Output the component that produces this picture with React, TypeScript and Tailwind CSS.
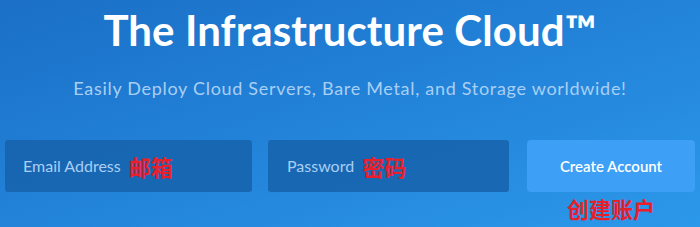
const cjk = { fontFamily: "'Noto Sans CJK SC', sans-serif" };

export default function App() {
  return (
    <div
      className="relative h-[227px] w-[700px] overflow-hidden bg-gradient-to-br from-[#1b6fc6] via-[#2283d9] to-[#2c98ea] text-white"
      style={{ fontFamily: "Lato, 'Open Sans', sans-serif" }}
    >
      <h1 className="pt-[6px] text-center text-[42px] font-bold leading-[48px] tracking-[0.1px]">
        The Infrastructure Cloud™
      </h1>
      <p className="mt-[23px] text-center text-[18px] leading-[22px] tracking-[0.7px] text-[#a9cff4]">
        Easily Deploy Cloud Servers, Bare Metal, and Storage worldwide!
      </p>

      <div className="mt-[41px] flex items-start px-[5px]">
        <div className="flex h-[52px] w-[247px] items-center rounded-[3px] bg-[#1764ae]/90 pl-[18px] text-[16px] text-[#a9cff4]">
          Email Address
          <span className="ml-[8px] text-[22px] font-bold text-[#e8202a]" style={cjk}>
            邮箱
          </span>
        </div>
        <div className="ml-[16px] flex h-[52px] w-[241px] items-center rounded-[3px] bg-[#1764ae]/90 pl-[19px] text-[16px] text-[#a9cff4]">
          Password
          <span className="ml-[8px] text-[22px] font-bold text-[#e8202a]" style={cjk}>
            密码
          </span>
        </div>
        <div className="ml-[18px] flex flex-col items-center">
          <button className="h-[52px] w-[168px] rounded-[4px] bg-[#3d9ff6] text-[15px] font-semibold text-white">
            Create Account
          </button>
          <span className="mt-[3px] text-[22px] font-bold leading-[26px] text-[#e8202a]" style={cjk}>
            创建账户
          </span>
        </div>
      </div>
    </div>
  );
}
